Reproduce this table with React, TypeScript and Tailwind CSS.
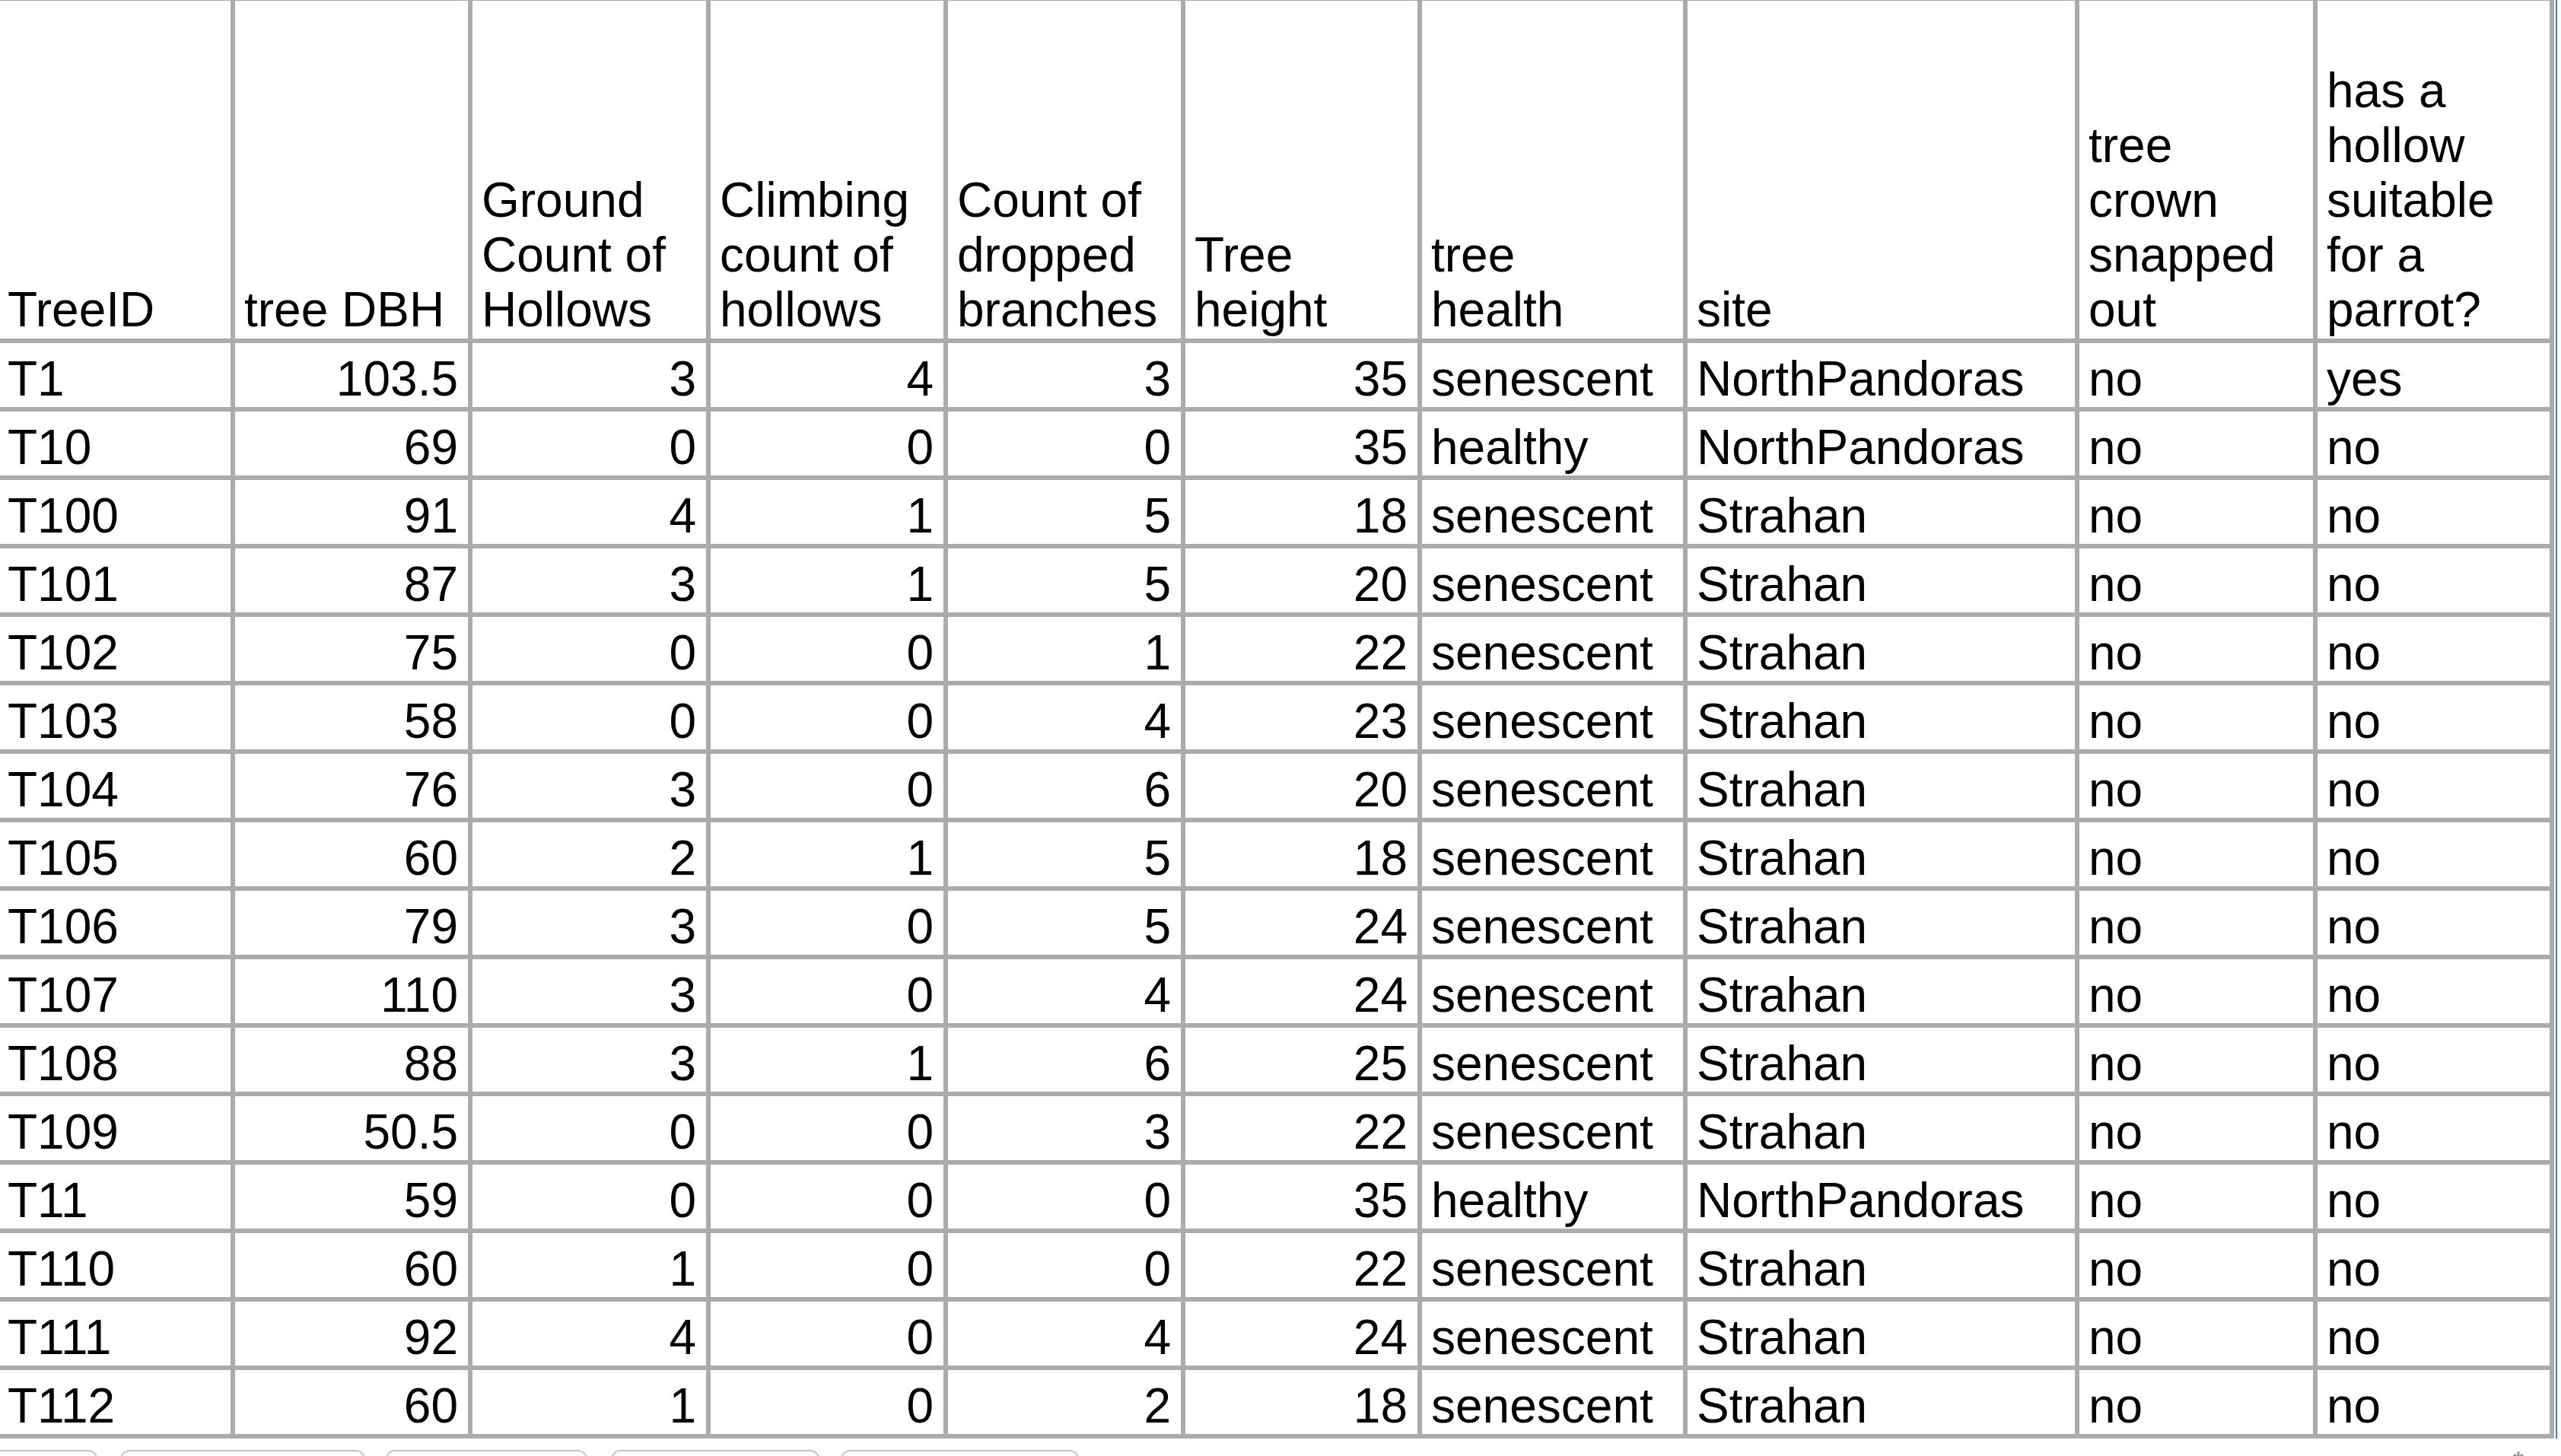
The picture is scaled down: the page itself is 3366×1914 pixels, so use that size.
import React from 'react';

type Row = [string, string, string, string, string, string, string, string, string, string];

const headers: string[][] = [
  ['TreeID'],
  ['tree DBH'],
  ['Ground', 'Count of', 'Hollows'],
  ['Climbing', 'count of', 'hollows'],
  ['Count of', 'dropped', 'branches'],
  ['Tree', 'height'],
  ['tree', 'health'],
  ['site'],
  ['tree', 'crown', 'snapped', 'out'],
  ['has a', 'hollow', 'suitable', 'for a', 'parrot?'],
];

const rows: Row[] = [
  ['T1', '103.5', '3', '4', '3', '35', 'senescent', 'NorthPandoras', 'no', 'yes'],
  ['T10', '69', '0', '0', '0', '35', 'healthy', 'NorthPandoras', 'no', 'no'],
  ['T100', '91', '4', '1', '5', '18', 'senescent', 'Strahan', 'no', 'no'],
  ['T101', '87', '3', '1', '5', '20', 'senescent', 'Strahan', 'no', 'no'],
  ['T102', '75', '0', '0', '1', '22', 'senescent', 'Strahan', 'no', 'no'],
  ['T103', '58', '0', '0', '4', '23', 'senescent', 'Strahan', 'no', 'no'],
  ['T104', '76', '3', '0', '6', '20', 'senescent', 'Strahan', 'no', 'no'],
  ['T105', '60', '2', '1', '5', '18', 'senescent', 'Strahan', 'no', 'no'],
  ['T106', '79', '3', '0', '5', '24', 'senescent', 'Strahan', 'no', 'no'],
  ['T107', '110', '3', '0', '4', '24', 'senescent', 'Strahan', 'no', 'no'],
  ['T108', '88', '3', '1', '6', '25', 'senescent', 'Strahan', 'no', 'no'],
  ['T109', '50.5', '0', '0', '3', '22', 'senescent', 'Strahan', 'no', 'no'],
  ['T11', '59', '0', '0', '0', '35', 'healthy', 'NorthPandoras', 'no', 'no'],
  ['T110', '60', '1', '0', '0', '22', 'senescent', 'Strahan', 'no', 'no'],
  ['T111', '92', '4', '0', '4', '24', 'senescent', 'Strahan', 'no', 'no'],
  ['T112', '60', '1', '0', '2', '18', 'senescent', 'Strahan', 'no', 'no'],
];

// numeric columns are right aligned
const numeric = [false, true, true, true, true, true, false, false, false, false];

export default function App() {
  return (
    <div
      className="w-[3366px] h-[1914px] bg-white overflow-hidden flex flex-col text-black"
      style={{ fontFamily: '"Liberation Sans", Arial, sans-serif' }}
    >
      <div className="flex">
        <div className="grid w-[3357px] grid-cols-[309px_312px_313px_312px_312px_311px_349px_515px_313px_311px] text-[64px] leading-[72px]">
          {/* Header */}
          {headers.map((lines, i) => (
            <div
              key={`h${i}`}
              className={`h-[451px] flex flex-col justify-end border-t border-r-[6px] border-b-[6px] border-[#ababab] pb-[2px] pr-[10px] ${
                i === 0 ? 'pl-[10px]' : 'pl-[12px]'
              }`}
            >
              {lines.map((l) => (
                <div key={l} className="whitespace-nowrap">
                  {l}
                </div>
              ))}
            </div>
          ))}

          {/* Rows */}
          {rows.map((row) =>
            row.map((cell, i) => (
              <div
                key={`${row[0]}-${i}`}
                className={`h-[90px] flex items-end border-r-[6px] border-b-[6px] border-[#ababab] pb-[1px] whitespace-nowrap ${
                  numeric[i] ? 'justify-end pr-[13px]' : 'justify-start'
                } ${i === 0 ? 'pl-[10px]' : 'pl-[12px]'}`}
              >
                {cell}
              </div>
            ))
          )}
        </div>
        <div className="w-[2px]" />
        <div className="w-[2px] bg-[#3f7fd8]" />
      </div>

      {/* Sheet tab bar */}
      <div className="h-[2px] bg-[#cfcfcf]" />
      <div className="flex items-start pt-[15px]">
        <div className="w-[128px] h-[24px] border-2 border-l-0 border-[#c4c4c4] rounded-tr-[12px]" />
        <div className="ml-[30px] w-[322px] h-[24px] border-2 border-[#c4c4c4] rounded-t-[12px]" />
        <div className="ml-[27px] w-[265px] h-[24px] border-2 border-[#c4c4c4] rounded-t-[12px]" />
        <div className="ml-[31px] w-[274px] h-[24px] border-2 border-[#c4c4c4] rounded-t-[12px]" />
        <div className="ml-[28px] w-[313px] h-[24px] border-2 border-[#c4c4c4] rounded-t-[12px]" />
        <div className="ml-auto mr-[42px] mt-[2px] w-[28px] h-[20px] flex justify-center">
          <svg width="28" height="20" viewBox="0 0 28 20">
            <path d="M14 0 L14 8 M8 4 L14 8 L20 4 M2 12 L26 12" stroke="#9a9a9a" strokeWidth="3" fill="none" />
          </svg>
        </div>
      </div>
    </div>
  );
}
